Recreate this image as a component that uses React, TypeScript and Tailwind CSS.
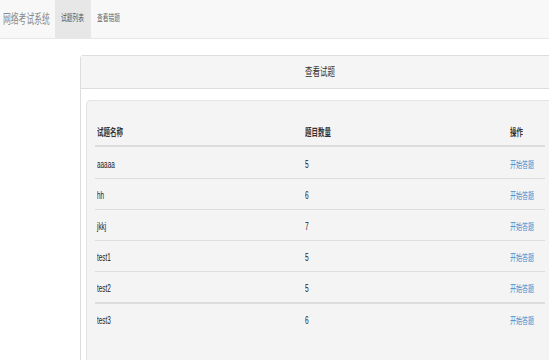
import React from "react";

const rows = [
  { name: "aaaaa", n: "5" },
  { name: "hh", n: "6" },
  { name: "jkkj", n: "7" },
  { name: "test1", n: "5" },
  { name: "test2", n: "5" },
  { name: "test3", n: "6" },
];

function Sq({ children, className = "" }: { children: React.ReactNode; className?: string }) {
  return <span className={`inline-block whitespace-nowrap ${className}`}>{children}</span>;
}

export default function App() {
  return (
    <div className="w-full h-[360px] overflow-hidden bg-white font-['Liberation_Sans','Noto_Sans_CJK_SC',sans-serif] text-[#333]">
      <nav className="h-[39px] bg-[#f8f8f8] border-b border-[#e7e7e7] flex items-stretch">
        <div className="w-[55px] pl-[3px] flex items-center">
          <Sq className="text-[13px] text-[#8a8a8a] origin-left scale-x-[0.6]">网络考试系统</Sq>
        </div>
        <div className="w-[36px] bg-[#e7e7e7] flex items-center pl-[6px]">
          <Sq className="text-[9px] text-[#555] origin-left scale-x-[0.64]">试题列表</Sq>
        </div>
        <div className="flex items-center pl-[6px]">
          <Sq className="text-[9px] text-[#666] origin-left scale-x-[0.64]">查看错题</Sq>
        </div>
      </nav>
      <div className="pl-[80px] pt-[16px]">
        <div className="mr-[-10px] border border-[#ddd] rounded-tl-[3px] bg-white">
          <div className="h-[33px] bg-[#f5f5f5] border-b border-[#ddd] flex items-center justify-center">
            <Sq className="text-[11px] text-[#333] origin-center scale-x-[0.68]">查看试题</Sq>
          </div>
          <div className="pl-[5px] pt-[11px]">
            <div className="bg-[#f4f4f4] border border-[#e3e3e3] rounded-tl-[4px] pl-[8px] pr-[12px] pt-[15px] pb-[40px]">
              <div className="flex h-[31px] items-center border-b-2 border-[#ddd]">
                <div className="w-[210px] shrink-0 pl-[2px]">
                  <Sq className="text-[10px] font-bold origin-left scale-x-[0.65]">试题名称</Sq>
                </div>
                <div className="w-[205px] shrink-0">
                  <Sq className="text-[10px] font-bold origin-left scale-x-[0.65]">题目数量</Sq>
                </div>
                <div className="flex-1 min-w-0">
                  <Sq className="text-[10px] font-bold origin-left scale-x-[0.65]">操作</Sq>
                </div>
              </div>
              {rows.map((r, i) => (
                <div
                  key={r.name}
                  className={`flex h-[31px] items-center ${i > 0 ? (i === 5 ? "border-t-2 border-[#ddd]" : "border-t border-[#ddd]") : ""}`}
                >
                  <div className="w-[210px] shrink-0 pl-[2px]">
                    <Sq className="text-[11px] text-[#222] origin-left scale-x-[0.58]">{r.name}</Sq>
                  </div>
                  <div className="w-[205px] shrink-0">
                    <Sq className="text-[11px] text-[#222] origin-left scale-x-[0.6]">{r.n}</Sq>
                  </div>
                  <div className="flex-1 min-w-0">
                    <Sq className="text-[9px] text-[#4a89c8] origin-left scale-x-[0.67]">开始答题</Sq>
                  </div>
                </div>
              ))}
            </div>
          </div>
        </div>
      </div>
    </div>
  );
}
